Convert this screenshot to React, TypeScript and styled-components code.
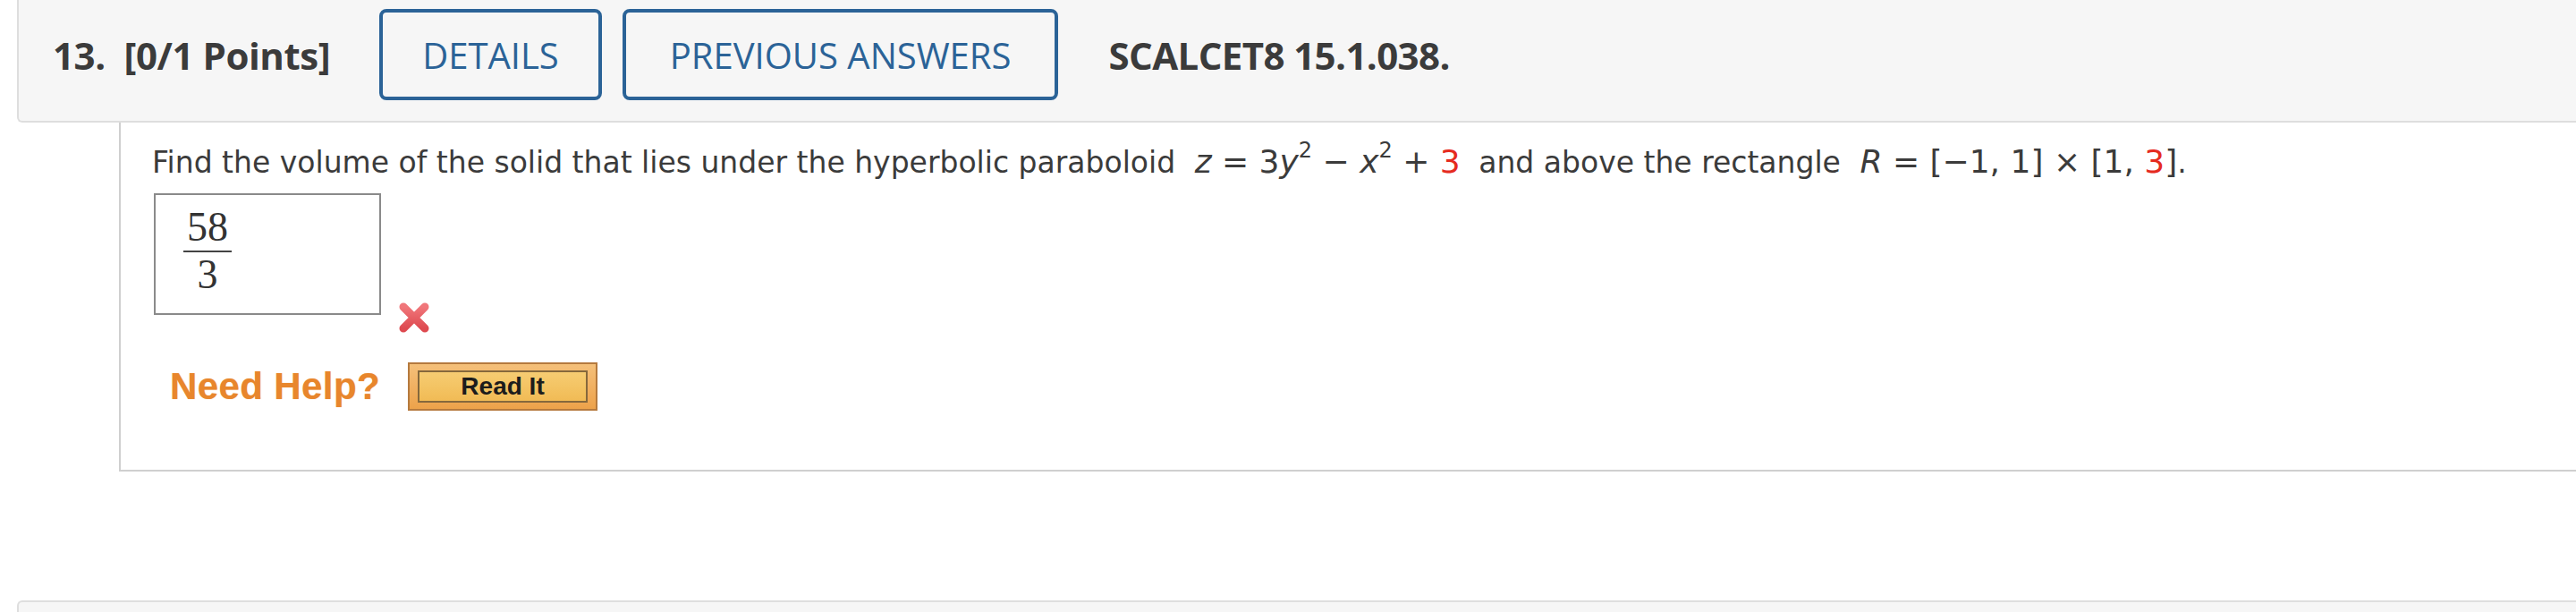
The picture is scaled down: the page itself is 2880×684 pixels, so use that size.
import React from 'react';
import styled, {createGlobalStyle} from 'styled-components';

const GlobalStyle = createGlobalStyle`
  html, body {
    margin: 0;
    padding: 0;
    background: #ffffff;
    overflow: hidden;
  }
`;

const Page = styled.div`
  padding-left: 19px;
  font-family: "DejaVu Sans", Verdana, sans-serif;
  color: #3b3b3b;
`;

const QuestionHeader = styled.div`
  display: flex;
  align-items: center;
  box-sizing: border-box;
  height: 137px;
  padding: 10px 0 23px 38px;
  background: #f6f6f6;
  border-left: 2px solid #dedede;
  border-bottom: 2px solid #dedede;
  border-bottom-left-radius: 6px;
  font-family: "Open Sans", "Liberation Sans", sans-serif;
`;

const Points = styled.span`
  font-size: 42px;
  font-weight: 700;
  letter-spacing: -0.45px;
  color: #3b3b3b;
  white-space: pre;
  margin-right: 55px;
`;

const Tabs = styled.div`
  display: flex;
  gap: 23px;
`;

const TabButton = styled.button<{ $pad: number }>`
  box-sizing: border-box;
  height: 102px;
  padding: 0 ${p => p.$pad}px;
  border: 4px solid #2b6397;
  border-radius: 8px;
  background: transparent;
  color: #2b6397;
  font-family: "Open Sans", "Liberation Sans", sans-serif;
  font-size: 40px;
  font-weight: 400;
`;

const Code = styled.span`
  margin-left: 56px;
  font-size: 42px;
  font-weight: 700;
  letter-spacing: -0.6px;
  color: #3b3b3b;
`;

const Body = styled.div`
  margin-left: 114px;
  padding: 25px 0 66px 35px;
  border-left: 2px solid #cfcfcf;
  border-bottom: 2px solid #cfcfcf;
`;

const Prompt = styled.div`
  font-size: 33px;
  line-height: 37px;
  white-space: nowrap;
`;

const Math = styled.span<{ $end?: boolean }>`
  margin: 0 ${p => (p.$end ? 0 : 10)}px 0 11px;
  font-size: 36px;
`;

const Var = styled.i`
  font-style: italic;
`;

const Sup = styled.sup`
  font-size: 24px;
  line-height: 0;
  vertical-align: 17px;
`;

const Red = styled.span`
  color: #e52b1f;
`;

const AnswerRow = styled.div`
  display: flex;
  align-items: flex-start;
  margin: 16px 0 0 2px;
`;

const AnswerBox = styled.div`
  box-sizing: border-box;
  width: 254px;
  height: 136px;
  padding: 13px 0 0 31px;
  border: 2px solid #8a8a8a;
  background: #fff;
`;

const Fraction = styled.div`
  display: inline-flex;
  flex-direction: column;
  align-items: center;
  font-family: "Liberation Serif", "DejaVu Serif", serif;
  font-size: 46px;
  line-height: 46px;
  color: #333;
`;

const Numerator = styled.span`
  padding: 0 4px;
`;

const Bar = styled.span`
  align-self: stretch;
  height: 2px;
  margin: 3px 0 2px;
  background: #444;
`;

const WrongMark = styled.svg`
  margin: 120px 0 0 16px;
`;

const HelpRow = styled.div`
  display: flex;
  align-items: center;
  gap: 31px;
  margin: 31px 0 0 20px;
`;

const NeedHelp = styled.span`
  font-family: "Liberation Sans", Arial, sans-serif;
  font-size: 42px;
  font-weight: 700;
  letter-spacing: 0.4px;
  color: #e8862c;
  text-shadow: 0 0 1px rgba(232, 134, 44, 0.6);
`;

const ReadIt = styled.button`
  box-sizing: border-box;
  width: 212px;
  height: 54px;
  padding: 7px 9px;
  border: 2px solid #b57a3e;
  background: linear-gradient(#f5c07a, #eda24a);
  cursor: pointer;
`;

const ReadItFace = styled.span`
  display: flex;
  align-items: center;
  justify-content: center;
  box-sizing: border-box;
  height: 100%;
  border: 2px solid #86683c;
  background: linear-gradient(#f6cc72, #f1bb55);
  font-family: "Liberation Sans", Arial, sans-serif;
  font-size: 28px;
  font-weight: 700;
  color: #1c1c1c;
`;

const NextPanel = styled.div`
  margin-top: 144px;
  height: 60px;
  background: #f6f6f6;
  border-top: 2px solid #dedede;
  border-left: 2px solid #dedede;
  border-top-left-radius: 6px;
`;

const App: React.FC = () => {
    return (
        <Page>
            <GlobalStyle/>
            <QuestionHeader>
                <Points>{'13.  [0/1 Points]'}</Points>
                <Tabs>
                    <TabButton $pad={44}>DETAILS</TabButton>
                    <TabButton $pad={49}>PREVIOUS ANSWERS</TabButton>
                </Tabs>
                <Code>SCALCET8 15.1.038.</Code>
            </QuestionHeader>
            <Body>
                <Prompt>
                    Find the volume of the solid that lies under the hyperbolic paraboloid{' '}
                    <Math>
                        <Var>z</Var> = 3<Var>y</Var><Sup>2</Sup> − <Var>x</Var><Sup>2</Sup> + <Red>3</Red>
                    </Math>
                    {' '}and above the rectangle{' '}
                    <Math $end>
                        <Var>R</Var> = [−1, 1] × [1, <Red>3</Red>]
                    </Math>
                    .
                </Prompt>
                <AnswerRow>
                    <AnswerBox>
                        <Fraction>
                            <Numerator>58</Numerator>
                            <Bar/>
                            <span>3</span>
                        </Fraction>
                    </AnswerBox>
                    <WrongMark width="42" height="38" viewBox="0 0 42 38">
                        <defs>
                            <linearGradient id="xg" x1="0" y1="0" x2="0" y2="1">
                                <stop offset="0" stopColor="#f0767a"/>
                                <stop offset="1" stopColor="#de4a50"/>
                            </linearGradient>
                        </defs>
                        <path d="M9 7 L33 31 M33 7 L9 31" stroke="url(#xg)" strokeWidth="9" strokeLinecap="round"/>
                    </WrongMark>
                </AnswerRow>
                <HelpRow>
                    <NeedHelp>Need Help?</NeedHelp>
                    <ReadIt>
                        <ReadItFace>Read It</ReadItFace>
                    </ReadIt>
                </HelpRow>
            </Body>
            <NextPanel/>
        </Page>
    );
};

export default App;
